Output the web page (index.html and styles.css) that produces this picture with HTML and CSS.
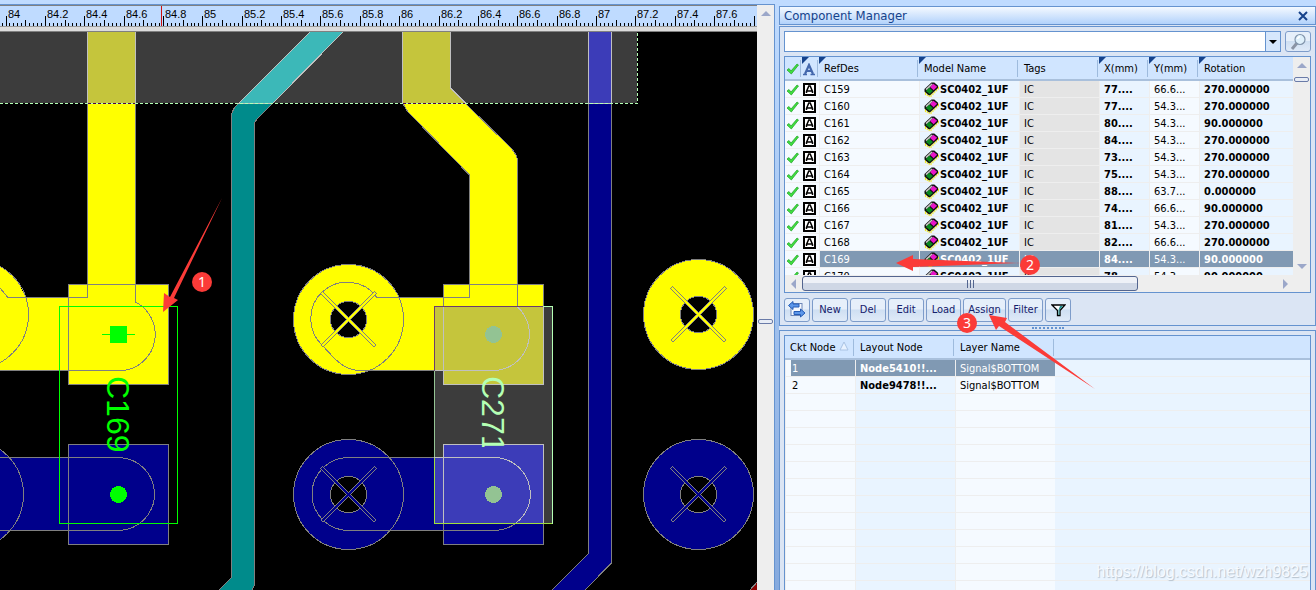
FILE: index.html
```
<!DOCTYPE html>
<html lang="en">
<head>
  <meta charset="utf-8">
  <title>Component Manager</title>
  <link rel="stylesheet" href="styles.css">
</head>
<body>
  <!-- shared icons -->
  <svg class="defs" width="0" height="0" aria-hidden="true">
    <symbol id="check" viewBox="0 0 14 14">
      <path d="M1 8 L3 6.500 L5 9 L11 2 L12.500 3 L5.300 12 Z" fill="#3fe03f" stroke="#1e9e22" stroke-width=".7"/>
    </symbol>
    <symbol id="attr" viewBox="0 0 14 14">
      <rect width="13" height="13" fill="#000"/>
      <rect x="2" y="2" width="9" height="9" fill="#fff"/>
      <path d="M3.500 10 V8.500 L5.800 3 H7.200 L9.500 8.500 V10 M4 8 H9" fill="none" stroke="#000" stroke-width="1.500"/>
    </symbol>
    <symbol id="chip" viewBox="0 0 16 16">
      <path d="M1.500 10v4M3.500 11v4M5.500 12v4M7.500 12v4M9.500 10v4M11.500 8v4M13.500 6v4M15.500 5v3" stroke="#f2e600"/>
      <path d="M0.500 7.500 L8 0.500 H11 L15 4 V6.500 L6.500 14 H5 L0.500 10 Z" fill="#111"/>
      <path d="M1.500 7.500 L8 1.500 L9.500 2.500 L3 8.700 Z" fill="#c4c4c4"/>
      <path d="M2 9.500 L5.500 6 L9.500 9.500 L6 12.800 Z" fill="#088a20"/>
      <path d="M6.500 5.200 L10 1.800 L14 5 L10.300 8.700 Z" fill="#e815c8"/>
    </symbol>
    <symbol id="cross" viewBox="-30 -30 60 60">
      <circle r="18" fill="#000" stroke="#808080"/>
      <path d="M-27 -27 L27 27 M-27 27 L27 -27" stroke="#808080" stroke-width="4"/>
      <path d="M-26.500 -26.500 L26.500 26.500 M-26.500 26.500 L26.500 -26.500" stroke="currentColor" stroke-width="2"/>
    </symbol>
  </svg>

  <div class="app">
    <main class="layout-window">
      <div class="layout-view">
        <svg class="ruler" id="ruler"></svg>
        <div class="ruler-edge"></div>
        <svg class="board" role="img" aria-label="Board layout">
          <g transform="translate(0 -32)">
            <!-- selection band -->
            <rect x="0" y="32" width="637" height="71" fill="#3c3c3c"/>

            <!-- copper, top layer -->
            <g fill="#ff0">
              <circle cx="-27" cy="314.500" r="55"/>
              <path d="M-5 297.500 H87.500 V32 H135.500 V302 A36.500 36.500 0 0 1 118 370.500 H-5 Z"/>
              <rect x="68.500" y="284.500" width="100" height="100"/>
              <circle cx="348.500" cy="319.500" r="55"/>
              <path d="M377 297.500 H469.500 V175 L411 115 Q402.500 106 402.500 98 V32 H450.500 V88 L511 148 Q517.500 155 517.500 162 V307 L493 370.500 H348 Z"/>
              <rect x="443.500" y="284.500" width="100" height="100"/>
              <circle cx="698.500" cy="314.500" r="55"/>
            </g>

            <!-- copper, bottom layer -->
            <g fill="#00008b" stroke="#808080">
              <path d="M588.500 30 V553.500 L550 592 H583 L611.500 563 V30"/>
              <circle cx="698.500" cy="494.500" r="55"/>
            </g>
            <g fill="#00008b">
              <circle cx="-32" cy="494.500" r="55"/>
              <path d="M-5 457.500 H118 V530.500 H-5 Z"/>
              <rect x="68.500" y="444.500" width="100" height="100"/>
              <circle cx="348.500" cy="494.500" r="55"/>
              <rect x="348.500" y="457.500" width="145" height="73"/>
              <rect x="443.500" y="444.500" width="100" height="100"/>
            </g>
            <path d="M310 32 L239 103 Q231.500 109 231.500 117 V577.500 L217 592 H251 L254.500 585 V123 L257 119 L343 32" fill="#008b8b" stroke="#808080"/>
            <path d="M748 592 L759 580 V592 Z" fill="#8b0000" stroke="#808080"/>

            <!-- parts lying under the selection band -->
            <g stroke="#c0c0c0">
              <path d="M87.500 32 V103 H135.500 V32" fill="#c5c53c" />
              <path d="M310 32 L239 103 H273 L343 32" fill="#3cb8b8"/>
              <path d="M402.500 32 V103 H465.500 L450.500 88 V32" fill="#c5c53c"/>
              <path d="M588.500 32 V103 H611.500 V32" fill="#3c3cb8"/>
            </g>

            <!-- parts lying under C271 -->
            <rect x="434.500" y="306.500" width="118" height="217" fill="#3c3c3c"/>
            <path d="M434.500 306.500 H543.500 V384.500 H443.500 V370.500 H434.500 Z" fill="#c5c53c"/>
            <path d="M434.500 457.500 H443.500 V444.500 H543.500 V523.500 H434.500 Z" fill="#3c3cb8"/>

            <!-- outlines -->
            <g class="outline">
              <circle cx="-26.500" cy="314.500" r="55"/>
              <path d="M0 288 L8 297.500 H87.500 V103 M135.500 103 V302 A36.500 36.500 0 0 1 124 370.500 H0"/>
              <rect x="68.500" y="284.500" width="100" height="100"/>
              <circle cx="-31.500" cy="494.500" r="55"/>
              <path d="M0 457.500 H118 A36.500 36.500 0 0 1 118 530.500 H0"/>
              <rect x="68.500" y="444.500" width="100" height="100"/>
              <circle cx="348.500" cy="319.500" r="55"/>
              <path d="M403 103 Q405 109 411 115 L469.500 175 V297.500 H377 A36.500 36.500 0 1 0 322 345 L335 359 Q347 370.500 359 370.500 H434 M465 103 L511 148 Q517.500 155 517.500 162 V306"/>
              <path d="M443.500 306 V284.500 H543.500 V306"/>
              <circle cx="348.500" cy="494.500" r="55"/>
              <path d="M434 457.500 H348.500 A36.500 36.500 0 0 0 348.500 530.500 H493 Q507 530.500 516 523"/>
              <path d="M443.500 523.500 V544.500 H543.500 V523.500"/>
              <circle cx="698.500" cy="314.500" r="55"/>
            </g>
            <g class="outline outline-light">
              <path d="M443.500 306 V384.500 H543.500 V306 M443.500 523 V444.500 H543.500 V523"/>
              <path d="M434 370.500 H493 A36.500 36.500 0 0 0 517.500 307 M434 457.500 H493 A36.500 36.500 0 0 1 516 523"/>
            </g>

            <!-- vias -->
            <g color="#ff0">
              <use href="#cross" x="318.500" y="289.500" width="60" height="60"/>
              <use href="#cross" x="668.500" y="284.500" width="60" height="60"/>
            </g>
            <g color="#00008b">
              <use href="#cross" x="318.500" y="464.500" width="60" height="60"/>
              <use href="#cross" x="668.500" y="464.500" width="60" height="60"/>
            </g>

            <path d="M0 103.500 H637.500 V32" fill="none" stroke="#b4ffb4" stroke-dasharray="3 2"/>
            <path d="M88 103.500 H135 M403 103.500 H465" fill="none" stroke="#4b004b" stroke-dasharray="3 2"/>

            <!-- C169 -->
            <rect x="59.500" y="306.500" width="118" height="217" fill="none" stroke="#0f0"/>
            <path d="M102 334.500 H135" stroke="#0f0"/>
            <rect x="110" y="326" width="17" height="17" fill="#0f0"/>
            <circle cx="118.500" cy="494.500" r="8.500" fill="#0f0"/>
            <text class="part" transform="translate(107 376) rotate(90)" fill="#0f0">C169</text>

            <!-- C271 -->
            <path d="M434.500 370.500 V306.500 H543" fill="none" stroke="#6c3c6c"/>
            <path d="M434.500 371 V457" stroke="#93c393"/>
            <path d="M543 306.500 H552.500 V523.500" fill="none" stroke="#b4ffb4"/>
            <path d="M434.500 458 V523.500 H552" fill="none" stroke="#a0e03c"/>
            <circle cx="493.500" cy="334.500" r="8.500" fill="#93c393"/>
            <circle cx="493.500" cy="494.500" r="8.500" fill="#93c393"/>
            <clipPath id="part-clip"><rect x="434" y="306" width="118" height="141"/></clipPath>
            <g clip-path="url(#part-clip)">
              <text class="part" transform="translate(482 376) rotate(90)" fill="#b4ffb4">C271</text>
            </g>

            <!-- step 1 -->
            <path d="M163 312 L164 293 L170 297 L222 198 L174 298 L178 300 Z" class="arrow"/>
            <circle cx="202" cy="282" r="10" class="arrow"/>
            <text x="202" y="287" class="step">1</text>
          </g>
        </svg>
      </div>
      <div class="vscroll">
        <span class="tri tri-up"></span>
        <span class="fill"></span>
        <span class="thumb"></span>
        <span class="fill fill-after"></span>
      </div>
    </main>

    <div class="dock-split"></div>

    <aside class="manager">
      <header class="titlebar">
        <h1>Component Manager</h1>
        <button class="close" type="button" aria-label="Close">
          <svg width="10" height="10" viewBox="0 0 10 10"><path d="M1 1 L9 9 M9 1 L1 9" stroke="#15428b" stroke-width="2"/></svg>
        </button>
      </header>

      <section class="box">
        <div class="search">
          <div class="combo">
            <input type="text" aria-label="Search components">
            <button type="button" aria-label="Show history"><span class="tri tri-combo"></span></button>
          </div>
          <button class="btn btn-icon btn-search" type="button" aria-label="Search">
            <svg width="18" height="18" viewBox="0 0 18 18">
              <path d="M3 16 L8 10" stroke="#8b94a5" stroke-width="3"/>
              <circle cx="11" cy="6.500" r="5" fill="#dff0fb" stroke="#8194ab" stroke-width="1.2"/>
              <path d="M8.500 6 Q9 4 11 3.800" fill="none" stroke="#fff" stroke-width="1.5"/>
            </svg>
          </button>
        </div>

        <div class="grid">
          <div class="grid-main">
            <div class="grid-view">
              <table class="parts">
                <colgroup>
                  <col class="w-icon"><col class="w-icon"><col class="w-wide"><col class="w-wide">
                  <col class="w-tags"><col class="w-num"><col class="w-num"><col>
                </colgroup>
                <thead>
                  <tr>
                    <th class="icon"><svg width="14" height="14"><use href="#check"/></svg></th>
                    <th class="icon mark"><svg width="13" height="13" viewBox="0 0 13 13"><path d="M2 11 L6 2 L10 11 M4 8 H8" fill="none" stroke="#4468ad" stroke-width="2.200"/><path d="M0 11.500 H4 M7.500 11.500 H12" stroke="#4468ad" stroke-width="1.500"/></svg></th>
                    <th class="mark">RefDes</th>
                    <th class="mark">Model Name</th>
                    <th>Tags</th>
                    <th class="mark">X(mm)</th>
                    <th class="mark">Y(mm)</th>
                    <th class="mark">Rotation</th>
                  </tr>
                </thead>
                <tbody id="parts"></tbody>
              </table>
            </div>
            <div class="vscroll">
              <span class="tri tri-up"></span>
              <span class="thumb thumb-top"></span>
              <span class="fill"></span>
              <span class="tri tri-down"></span>
            </div>
          </div>
          <div class="hscroll">
            <span class="tri tri-left"></span>
            <span class="hthumb"><i></i><i></i><i></i></span>
            <span class="fill"></span>
            <span class="tri tri-right"></span>
          </div>
        </div>

        <div class="toolbar">
          <button class="btn btn-icon" type="button" aria-label="Refresh">
            <svg width="18" height="18" viewBox="0 0 18 18">
              <rect x="3" y="2.500" width="11" height="12" fill="#f5f9ff" stroke="#6d87b8"/>
              <path d="M0.500 4.500 L5 0.500 V3 H11 V6 H5 V8.500 Z" fill="#5c97ea" stroke="#245bb5"/>
              <path d="M17 12 L12.500 8 V10.500 H6 V13.500 H12.500 V16 Z" fill="#5c97ea" stroke="#245bb5"/>
            </svg>
          </button>
          <button class="btn" type="button">New</button>
          <button class="btn" type="button">Del</button>
          <button class="btn" type="button">Edit</button>
          <button class="btn btn-load" type="button">Load</button>
          <button class="btn btn-long" type="button">Assign</button>
          <button class="btn btn-load" type="button">Filter</button>
          <button class="btn btn-icon" type="button" aria-label="Filter options">
            <svg width="15" height="13" viewBox="0 0 15 13">
              <path d="M1 1 H14 L9 6.500 V11.500 H6.500 V6.500 Z" fill="#fff" stroke="#000" stroke-width="1.300"/>
              <path d="M9 2 H12 L8.500 6 V11 H7.500 V6Z" fill="#1d8f8f"/>
            </svg>
          </button>
        </div>
      </section>

      <div class="panel-split"><span></span></div>

      <section class="box box-nodes">
        <div class="grid">
          <table class="nodes">
            <colgroup><col class="w-node"><col class="w-wide"><col class="w-wide"><col></colgroup>
            <thead>
              <tr>
                <th>Ckt Node <svg class="sort" width="10" height="10" viewBox="0 0 10 10"><path d="M1 9 L5 1 L9 9 Z" fill="#e8f2ff" stroke="#a9c3e4"/></svg></th>
                <th>Layout Node</th>
                <th>Layer Name</th>
                <th></th>
              </tr>
            </thead>
            <tbody id="nodes"></tbody>
          </table>
        </div>
      </section>

      <!-- steps 2 and 3 -->
      <svg class="notes">
        <g transform="translate(-779 -6)">
          <path d="M896 263 L913 255 V259 L1020 263 L913 267 V271 Z" class="arrow"/>
          <circle cx="1030" cy="265" r="10" class="arrow"/>
          <text x="1030" y="270" class="step">2</text>
          <path d="M989 315 L1007 318 L1005 322 L1095 389 L999 326 L996 330 Z" class="arrow"/>
          <circle cx="967" cy="323" r="10" class="arrow"/>
          <text x="967" y="328" class="step">3</text>
        </g>
      </svg>
      <div class="watermark">https://blog.csdn.net/wzh9825</div>
    </aside>
  </div>

  <script src="script.js"></script>
</body>
</html>
```

FILE: styles.css
```
* {
  box-sizing: border-box;
}

html,
body {
  height: 100%;
}

body {
  margin: 0;
  overflow: hidden;
  background: #bfdbff;
  color: #000;
  font-family: "DejaVu Sans Condensed", "DejaVu Sans", sans-serif;
  font-size: 11px;
  line-height: 16px;
}

button,
input {
  font: inherit;
}

svg {
  display: block;
}

.defs {
  position: absolute;
}

.app {
  display: flex;
  height: 100vh;
}

/* layout window */
.layout-window {
  flex: 1;
  min-width: 0;
  display: flex;
  margin-top: 4px;
  border-top: 1px solid #6593cf;
  border-right: 1px solid #6593cf;
}

.layout-view {
  flex: 1;
  min-width: 0;
  display: flex;
  flex-direction: column;
}

.ruler {
  width: 100%;
  height: 21px;
  border-top: 1px solid #808080;
  background: #bfdbff;
  font-family: "Liberation Sans", Arial, sans-serif;
  font-size: 11px;
}

.ruler-edge {
  height: 6px;
  border-top: 1px solid #999;
  border-bottom: 1px solid #808080;
  background: #dcdcdc;
}

.board {
  flex: 1;
  width: 100%;
  min-height: 0;
  background: #000;
  shape-rendering: crispEdges;
}

.outline {
  fill: none;
  stroke: #808080;
}

.outline-light {
  stroke: #c0c0c0;
}

.part {
  font-family: "Liberation Sans", Arial, sans-serif;
  font-size: 32px;
}

.arrow {
  fill: #fb3b38;
  shape-rendering: auto;
}

.step {
  fill: #fff;
  font-family: "Noto Sans", sans-serif;
  font-size: 14px;
  text-anchor: middle;
}

.dock-split {
  width: 4px;
  background: linear-gradient(#bfdbff, #86aade);
}

/* scrollbars */
.vscroll {
  width: 17px;
  display: flex;
  flex-direction: column;
  align-items: center;
  padding: 6px 0;
  background: #eee;
}

.thumb {
  width: 15px;
  height: 5px;
  border: 1px solid #6a7ba8;
  border-radius: 2px;
  background: #e8edf6;
}

.thumb-top {
  margin-top: 9px;
}

.fill {
  flex: 7;
}

.fill-after {
  flex: 6;
}

.tri {
  width: 0;
  height: 0;
  border: 5px solid transparent;
}

.tri-up {
  border-top: 0;
  border-bottom-color: #9ba7c9;
}

.tri-down {
  border-bottom: 0;
  border-top-color: #9ba7c9;
}

.tri-left {
  border-left: 0;
  border-right-color: #9ba7c9;
}

.tri-right {
  border-right: 0;
  border-left-color: #9ba7c9;
}

.tri-combo {
  border-width: 4px 4px 0;
  border-top-color: #000;
}

.hscroll {
  display: flex;
  align-items: center;
  height: 17px;
  padding: 0 22px 0 6px;
  background: #eee;
}

.hthumb {
  display: flex;
  align-items: center;
  justify-content: center;
  gap: 2px;
  width: 336px;
  height: 15px;
  margin-left: 6px;
  border: 1px solid #53658f;
  border-radius: 3px;
  background: linear-gradient(#eef1f7 50%, #cfd7e5 50%);
}

.hthumb i {
  width: 1px;
  height: 8px;
  background: #53658f;
}

/* component manager */
.manager {
  position: relative;
  flex: 0 0 537px;
  display: flex;
  flex-direction: column;
  margin-top: 6px;
  background: #dbe5f4;
}

.titlebar {
  display: flex;
  align-items: center;
  justify-content: space-between;
  height: 19px;
  margin-bottom: 1px;
  padding: 0 7px 0 4px;
  border: 1px solid #6593cf;
  background: linear-gradient(#f4f9ff, #b2d2fb);
}

.titlebar h1 {
  margin: 0;
  color: #15428b;
  font-size: 13px;
  font-weight: normal;
}

.close {
  padding: 0;
  border: 0;
  background: none;
}

.box {
  padding: 4px 4px 3px;
  border: 1px solid #6593cf;
}

.search {
  display: flex;
  gap: 4px;
  margin-bottom: 4px;
}

.combo {
  flex: 1;
  display: flex;
  height: 21px;
  border: 1px solid #6593cf;
  background: #fff;
}

.combo input {
  flex: 1;
  min-width: 0;
  padding: 0 4px;
  border: 0;
  outline: 0;
}

.combo button {
  display: flex;
  align-items: center;
  justify-content: center;
  width: 15px;
  padding: 0;
  border: 0;
  border-left: 1px solid #6593cf;
  background: #d6e7fc;
}

.btn {
  display: flex;
  align-items: center;
  justify-content: center;
  width: 36px;
  height: 24px;
  padding: 0;
  border: 1px solid #7d9cca;
  border-radius: 3px;
  background: linear-gradient(#e6effa 45%, #cfdff2 50%, #dfeaf8);
  color: #15206b;
}

.btn-icon {
  width: 26px;
}

.btn-search {
  height: 21px;
}

.btn-load {
  width: 35px;
}

.btn-long {
  width: 43px;
}

.toolbar {
  display: flex;
  gap: 2px;
  margin-top: 5px;
}

.panel-split {
  display: flex;
  align-items: center;
  justify-content: center;
  height: 4px;
}

.panel-split span {
  width: 32px;
  border-top: 2px dotted #6593cf;
}

.box-nodes {
  flex: 1;
  min-height: 0;
  overflow: hidden;
  border-bottom: 0;
}

/* tables */
.grid {
  border: 1px solid #6593cf;
  background: #eee;
}

.grid-main {
  display: flex;
}

.grid-view {
  flex: 1;
  height: 218px;
  overflow: hidden;
}

table {
  width: 100%;
  table-layout: fixed;
  border-collapse: separate;
  border-spacing: 0;
}

.w-icon {
  width: 17px;
}

.w-wide {
  width: 100px;
}

.w-tags {
  width: 80px;
}

.w-num {
  width: 50px;
}

.w-node {
  width: 70px;
}

th {
  position: relative;
  height: 24px;
  padding: 1px 0 0 5px;
  border-bottom: 2px solid #a9c0dc;
  background: linear-gradient(#9ebbdd, #9ebbdd) right 1px center / 1px 17px no-repeat #d0e5ff;
  font-weight: normal;
  text-align: left;
  white-space: nowrap;
}

th:last-child {
  background: #d0e5ff;
}

.mark::before {
  content: "";
  position: absolute;
  top: 0;
  left: 0;
  border-top: 7px solid #15428b;
  border-right: 7px solid transparent;
}

th.icon {
  padding: 2px 0 0 1px;
}

.sort {
  display: inline-block;
}

td {
  height: 17px;
  padding: 1px 0 0 4px;
  border-bottom: 1px solid #eee;
  border-left: 1px solid #eee;
  background: #e9f4ff;
  line-height: 15px;
  white-space: nowrap;
  overflow: hidden;
}

td.icon {
  padding: 1px 0 0;
  border-left-color: #f5faff;
}

td svg {
  flex: none;
}

td.pale {
  background: #f5faff;
}

td.tags {
  background: #e4e4e4;
}

td.strong {
  font-weight: bold;
}

.model {
  display: flex;
  gap: 1px;
}

.selected td:not(.icon) {
  background: #8099b3;
  color: #fff;
}

.nodes td:first-child {
  padding-left: 6px;
}

.nodes td:last-child {
  border-left: 0;
}

.nodes .selected td:first-child {
  background: linear-gradient(90deg, #f5faff 5px, #8099b3 5px);
}

.nodes .selected td:last-child {
  background: #e9f4ff;
}

/* overlays */
.notes {
  position: absolute;
  top: 0;
  left: 0;
  width: 100%;
  height: 100%;
  pointer-events: none;
}

.watermark {
  position: absolute;
  right: 8px;
  bottom: 8px;
  color: #f6faff;
  font-family: "Liberation Sans", Arial, sans-serif;
  font-size: 16px;
  line-height: 20px;
  text-shadow: 1px 1px 1px #b4c0cc;
}
```

FILE: script.js
```
var parts = [
  ["C159", "77....", "66.6...", "270.000000"],
  ["C160", "77....", "54.3...", "270.000000"],
  ["C161", "80....", "54.3...", "90.000000"],
  ["C162", "84....", "54.3...", "270.000000"],
  ["C163", "73....", "54.3...", "270.000000"],
  ["C164", "75....", "54.3...", "270.000000"],
  ["C165", "88....", "63.7...", "0.000000"],
  ["C166", "74....", "66.6...", "90.000000"],
  ["C167", "81....", "54.3...", "270.000000"],
  ["C168", "82....", "66.6...", "270.000000"],
  ["C169", "84....", "54.3...", "90.000000"],
  ["C170", "78....", "54.3...", "90.000000"]
];

var nodes = [
  ["1", "Node5410!!...", "Signal$BOTTOM"],
  ["2", "Node9478!!...", "Signal$BOTTOM"]
];

function icon(name, size) {
  return '<svg width="' + size + '" height="' + size + '"><use href="#' + name + '"/></svg>';
}

function drawParts() {
  var html = "";
  parts.forEach(function (p) {
    html += '<tr' + (p[0] === "C169" ? ' class="selected"' : "") + '>' +
      '<td class="icon pale">' + icon("check", 14) + '</td>' +
      '<td class="icon pale">' + icon("attr", 14) + '</td>' +
      '<td class="pale">' + p[0] + '</td>' +
      '<td class="strong"><div class="model">' + icon("chip", 15) + 'SC0402_1UF</div></td>' +
      '<td class="tags">IC</td>' +
      '<td class="strong">' + p[1] + '</td>' +
      '<td class="pale">' + p[2] + '</td>' +
      '<td class="strong">' + p[3] + '</td></tr>';
  });
  document.getElementById("parts").innerHTML = html;
}

function drawNodes() {
  var html = "";
  for (var i = 0; i < 40; i++) {
    var n = nodes[i] || ["", "", ""];
    html += '<tr' + (i === 0 ? ' class="selected"' : "") + '>' +
      '<td class="pale">' + n[0] + '</td>' +
      '<td class="strong">' + n[1] + '</td>' +
      '<td class="pale">' + n[2] + '</td><td></td></tr>';
  }
  document.getElementById("nodes").innerHTML = html;
}

// one label every 0.2 mm, ten ticks between labels
function drawRuler() {
  var ruler = document.getElementById("ruler");
  var width = ruler.getBoundingClientRect().width;
  var step = 39.37;
  var start = 6;
  var ticks = "";
  var labels = "";
  for (var i = -1; start + i * step < width; i++) {
    var x = start + i * step;
    var value = Math.round((84 + i * 0.2) * 10) / 10;
    for (var j = 0; j < 10; j++) {
      var top = j === 0 ? 10 : (j === 5 ? 14 : 17);
      ticks += "M" + (Math.floor(x + j * step / 10) + 0.5) + " " + top + "V20";
    }
    // skip labels that would be cut at either end
    if (x > 0 && x + 20 < width) {
      labels += '<text x="' + (Math.floor(x) + 2) + '" y="12">' + value + '</text>';
    }
  }
  ruler.innerHTML =
    '<path d="' + ticks + '" stroke="#000"/>' + labels +
    '<path d="M161.5 0V26" stroke="#d01010"/>';
}

drawParts();
drawNodes();
drawRuler();
```
